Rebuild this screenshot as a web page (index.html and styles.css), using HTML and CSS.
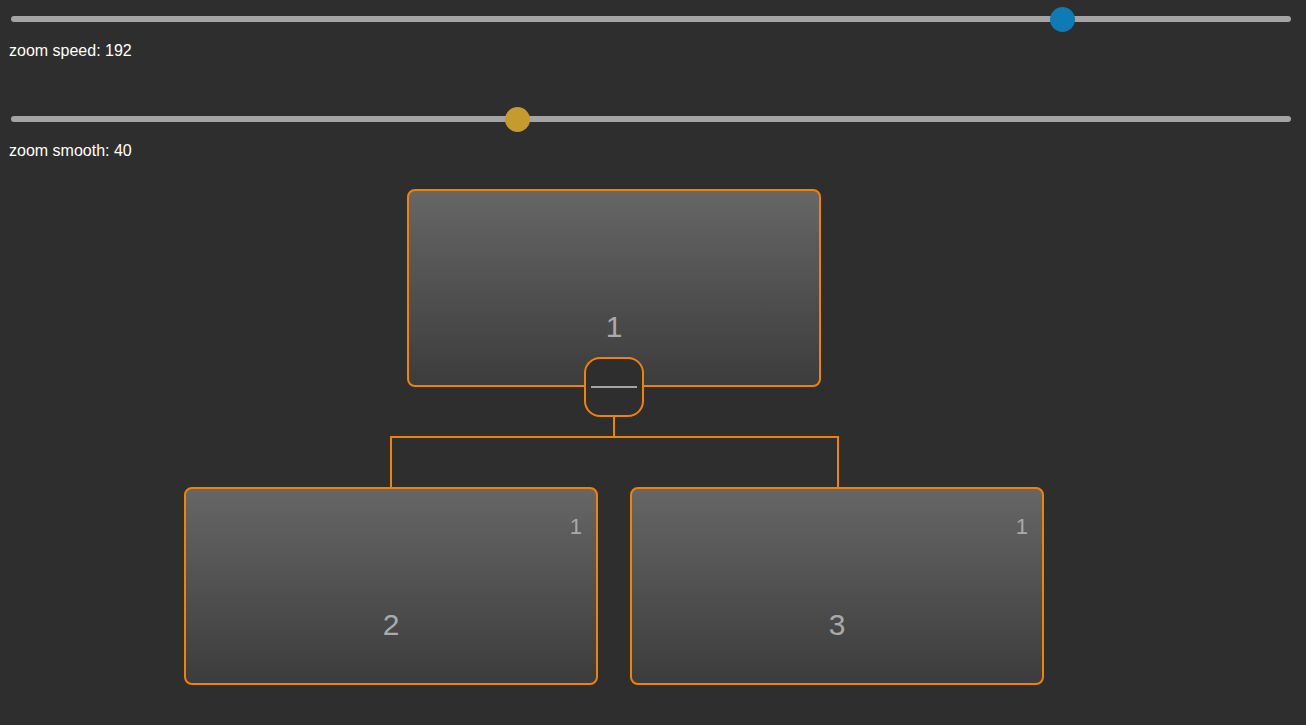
FILE: index.html
```html
<!DOCTYPE html>
<html lang="en">
<head>
<meta charset="utf-8">
<title>Tree zoom</title>
<link rel="stylesheet" href="styles.css">
</head>
<body>
  <div class="controls">
    <div class="slider" role="slider" aria-valuenow="192">
      <div class="track"></div>
      <div class="thumb thumb-blue" style="left: 1038.5px"></div>
    </div>
    <div class="label">zoom speed: 192</div>
    <div class="slider slider-second" role="slider" aria-valuenow="40">
      <div class="track"></div>
      <div class="thumb thumb-gold" style="left: 494px"></div>
    </div>
    <div class="label">zoom smooth: 40</div>
  </div>

  <div class="tree">
    <div class="card root">
      <span class="num">1</span>
    </div>
    <div class="toggle"><span class="dash"></span></div>
    <div class="stem"></div>
    <div class="branch"></div>
    <div class="children">
      <div class="card">
        <span class="badge">1</span>
        <span class="num">2</span>
      </div>
      <div class="card">
        <span class="badge">1</span>
        <span class="num">3</span>
      </div>
    </div>
  </div>
</body>
</html>
```

FILE: styles.css
```css
html, body {
  margin: 0;
  padding: 0;
  background: #2e2e2e;
  font-family: "Liberation Sans", Arial, sans-serif;
}

.controls {
  padding-top: 7px;
}

.slider {
  position: relative;
  margin-left: 11px;
  width: 1280px;
  height: 24px;
}

.slider-second {
  margin-top: 47px;
}

.track {
  position: absolute;
  left: 0;
  right: 0;
  top: 9px;
  height: 6px;
  border-radius: 3px;
  background: #a4a4a4;
}

.thumb {
  position: absolute;
  top: -0.5px;
  width: 25px;
  height: 25px;
  border-radius: 50%;
}

.thumb-blue { background: #0f7bb4; }
.thumb-gold { background: #c49b2c; }

.label {
  margin-top: 11px;
  padding-left: 9px;
  font-size: 16px;
  line-height: 18px;
  height: 18px;
  color: #ffffff;
}

.tree {
  margin-top: 29px;
  margin-left: 184px;
  width: 860px;
  display: flex;
  flex-direction: column;
  align-items: center;
}

.card {
  position: relative;
  box-sizing: border-box;
  width: 414px;
  height: 198px;
  border: 2px solid #f08300;
  border-radius: 8px;
  background: linear-gradient(#666666, #3c3c3c);
  display: flex;
  justify-content: center;
  padding-top: 118px;
}

.num {
  font-size: 30px;
  line-height: 36px;
  height: 36px;
  color: #aaaaaa;
}

.badge {
  position: absolute;
  top: 25px;
  right: 14px;
  font-size: 22px;
  line-height: 26px;
  color: #aaaaaa;
}

.toggle {
  position: relative;
  box-sizing: border-box;
  margin-top: -30px;
  width: 60px;
  height: 60px;
  border: 2px solid #f08300;
  border-radius: 16px;
  background: #2e2e2e;
  display: flex;
  align-items: center;
  justify-content: center;
}

.dash {
  width: 46px;
  height: 2px;
  background: #a4a4a4;
}

.stem {
  width: 2px;
  height: 19px;
  background: #f08300;
}

.branch {
  box-sizing: border-box;
  width: 449px;
  height: 51px;
  border: 2px solid #f08300;
  border-bottom: none;
}

.children {
  display: flex;
  gap: 32px;
}
```
